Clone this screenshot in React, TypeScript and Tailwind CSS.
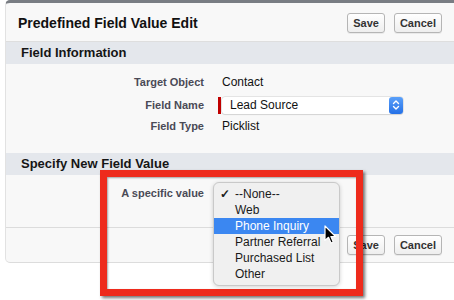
import React from "react";

function Btn({ label }: { label: string }) {
  return (
    <button className="h-[20px] px-[5px] rounded-[3px] border border-[#b5b5b5] bg-gradient-to-b from-white to-[#eeeeee] text-[11px] font-bold text-[#333] leading-none shadow-[0_1px_0_rgba(0,0,0,0.06)]">
      {label}
    </button>
  );
}

function Row({ label, children }: { label: string; children: React.ReactNode }) {
  return (
    <div className="flex items-center h-full">
      <div className="w-[198px] text-right text-[11px] font-bold text-[#4a4a56]">{label}</div>
      <div className="ml-[14px] flex items-center">{children}</div>
    </div>
  );
}

export default function App() {
  return (
    <div
      className="relative w-[454px] h-[300px] overflow-hidden bg-white"
      style={{ fontFamily: '"Liberation Sans", Arial, sans-serif' }}
    >
      <div className="ml-[5px] w-[470px] bg-[#f8f8f8] border-t-[3px] border-t-[#797d83] border-l border-l-[#e2e2e2] border-b border-b-[#dcdcdc] rounded-tl-[5px] rounded-bl-[5px]">
        {/* header */}
        <div className="h-[39px] flex items-center pl-[12px] pr-[33px] border-b border-[#dedede]">
          <div className="text-[14px] font-bold text-[#111] pt-[2px]">Predefined Field Value Edit</div>
          <div className="ml-auto flex gap-[9px] pt-[2px]">
            <Btn label="Save" />
            <Btn label="Cancel" />
          </div>
        </div>
        {/* section 1 */}
        <div className="h-[22px] bg-[#e4e7ec] flex items-center pl-[15px] text-[13px] font-bold text-[#151515]">
          Field Information
        </div>
        <div className="pt-[10px] pb-[19px] flex flex-col">
          <div className="h-[16px]">
            <Row label="Target Object">
              <span className="text-[12px] text-[#111] pl-[4px]">Contact</span>
            </Row>
          </div>
          <div className="h-[18px] mt-[6px]">
            <Row label="Field Name">
              <div className="w-[3px] h-[17px] bg-[#c00000]" />
              <div className="ml-[1px] w-[181px] h-[17px] bg-white rounded-[3px] shadow-[0_0_0_0.5px_#cfcfcf,0_1px_1px_rgba(0,0,0,0.12)] flex items-center">
                <span className="pl-[8px] text-[12px] text-[#111]">Lead Source</span>
                <div className="ml-auto w-[14px] h-[17px] rounded-[3px] bg-gradient-to-b from-[#5aa0fa] to-[#2470e6] flex items-center justify-center">
                  <svg width="8" height="12" viewBox="0 0 8 12" fill="none" stroke="white" strokeWidth="1.4" strokeLinecap="round" strokeLinejoin="round">
                    <path d="M1.5 4.5 L4 2 L6.5 4.5" />
                    <path d="M1.5 7.5 L4 10 L6.5 7.5" />
                  </svg>
                </div>
              </div>
            </Row>
          </div>
          <div className="h-[16px] mt-[4px]">
            <Row label="Field Type">
              <span className="text-[12px] text-[#111] pl-[4px]">Picklist</span>
            </Row>
          </div>
        </div>
        {/* section 2 */}
        <div className="h-[22px] bg-[#e4e7ec] flex items-center pl-[15px] text-[13px] font-bold text-[#151515]">
          Specify New Field Value
        </div>
        <div className="pt-[10px] pb-[26px] border-b border-[#dcdcdc]">
          <div className="h-[16px]">
            <Row label="A specific value">
              <span />
            </Row>
          </div>
        </div>
        <div className="h-[34px] flex items-center pr-[33px]">
          <div className="ml-auto flex gap-[9px]">
            <Btn label="Save" />
            <Btn label="Cancel" />
          </div>
        </div>
      </div>

      {/* red highlight rectangle */}
      <div className="absolute left-[100px] top-[170px] w-[263px] h-[126px] border-[7px] border-[#ee2b1c] shadow-[2px_2px_3px_rgba(0,0,0,0.55),inset_1px_1px_2px_rgba(0,0,0,0.35)]" />

      {/* dropdown menu */}
      <div className="absolute left-[213px] top-[182px] w-[127px] h-[104px] rounded-[6px] bg-[#f0f0f0] border border-[#c9c9c9] shadow-[0_1px_4px_rgba(0,0,0,0.18)] py-[3px] text-[12px] text-[#1a1a1a]">
        {["--None--", "Web", "Phone Inquiry", "Partner Referral", "Purchased List", "Other"].map((t, i) => (
          <div
            key={t}
            className={
              "h-[16px] flex items-center " + (i === 2 ? "bg-[#3b87f1] text-white" : "")
            }
          >
            <span className="w-[21px] pl-[6px] text-[12px] font-bold">{i === 0 ? "✓" : ""}</span>
            <span>{t}</span>
          </div>
        ))}
      </div>

      {/* cursor */}
      <svg className="absolute left-[324px] top-[225px]" width="13" height="20" viewBox="0 0 13 20">
        <path d="M1 1 L1 15.5 L4.5 12.3 L7 18 L9.3 17 L6.9 11.5 L11.5 11.5 Z" fill="black" stroke="white" strokeWidth="1.2" strokeLinejoin="round" />
      </svg>
    </div>
  );
}
